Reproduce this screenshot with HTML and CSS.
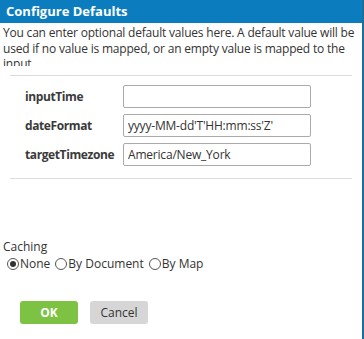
FILE: index.html
```html
<!DOCTYPE html>
<html lang="en">
<head>
  <meta charset="UTF-8">
  <meta name="viewport" content="width=device-width, initial-scale=1.0">
  <title>Configure Defaults</title>
  <link rel="stylesheet" href="styles.css">
</head>
<body>
  <div class="dialog">
    <div class="dialog-title">Configure Defaults</div>
    <div class="dialog-body">
      <p class="intro">You can enter optional default values here. A default value will be used if no value is mapped, or an empty value is mapped to the input.</p>

      <div class="fields">
        <div class="field-row">
          <label for="inputTime">inputTime</label>
          <input type="text" id="inputTime" value="">
        </div>
        <div class="field-row">
          <label for="dateFormat">dateFormat</label>
          <input type="text" id="dateFormat" value="yyyy-MM-dd'T'HH:mm:ss'Z'">
        </div>
        <div class="field-row">
          <label for="targetTimezone">targetTimezone</label>
          <input type="text" id="targetTimezone" value="America/New_York">
        </div>
      </div>

      <div class="caching">
        <div class="caching-title">Caching</div>
        <div class="radio-group">
          <label class="radio"><span class="radio-dot checked"></span>None</label>
          <label class="radio"><span class="radio-dot"></span>By Document</label>
          <label class="radio"><span class="radio-dot"></span>By Map</label>
        </div>
      </div>

      <div class="actions">
        <button class="btn btn-ok">OK</button>
        <button class="btn btn-cancel">Cancel</button>
      </div>
    </div>
  </div>
</body>
</html>
```

FILE: styles.css
```css
body {
  margin: 0;
  font-family: "Open Sans", "DejaVu Sans", sans-serif;
  font-size: 12px;
  color: #333;
  background: #fff;
}
.dialog {
  width: 362px;
  height: 339px;
  border-right: 2px solid #1d6f9a;
  overflow: hidden;
}
.dialog-title {
  height: 23px;
  line-height: 23px;
  padding-left: 6px;
  background-color: #0b7dbf;
  color: #fff;
  font-weight: bold;
  font-size: 13px;
}
.intro {
  margin: 2px 0 0 3px;
  line-height: 15.5px;
  height: 41px;
  overflow: hidden;
  letter-spacing: -0.2px;
}
.fields {
  margin: 9px 10px 0 10px;
  padding: 9px 0 12px 15px;
  border-top: 1px solid #ddd;
  border-bottom: 1px solid #ddd;
}
.field-row {
  display: flex;
  align-items: center;
  margin-bottom: 6px;
}
.field-row:last-child {
  margin-bottom: 0;
}
.field-row label {
  width: 98px;
  font-weight: bold;
  letter-spacing: -0.4px;
  color: #3a3a3a;
}
.field-row input {
  width: 188px;
  height: 23px;
  box-sizing: border-box;
  border: 1px solid #aaa;
  border-radius: 2px;
  padding: 0 4px;
  font-family: inherit;
  font-size: 12px;
  color: #333;
  letter-spacing: -0.2px;
}
.caching {
  margin: 60px 0 0 3px;
}
.caching-title {
  line-height: 16px;
}
.radio-group {
  display: flex;
  align-items: center;
  padding-left: 4px;
  line-height: 18px;
}
.radio {
  display: flex;
  align-items: center;
  margin-right: 5px;
}
.radio-dot {
  width: 10px;
  height: 10px;
  border: 1px solid #555;
  border-radius: 50%;
  margin-right: 1px;
  position: relative;
}
.radio-dot.checked::after {
  content: "";
  position: absolute;
  left: 2px;
  top: 2px;
  width: 6px;
  height: 6px;
  border-radius: 50%;
  background: #333;
}
.actions {
  margin: 28px 0 0 20px;
  display: flex;
  gap: 12px;
}
.btn {
  width: 58px;
  height: 23px;
  border: none;
  border-radius: 3px;
  font-family: inherit;
  font-size: 12px;
  cursor: pointer;
}
.btn-ok {
  background-color: #7dc242;
  color: #fff;
  font-weight: bold;
}
.btn-cancel {
  background-color: #d6d6d6;
  color: #333;
}
```
